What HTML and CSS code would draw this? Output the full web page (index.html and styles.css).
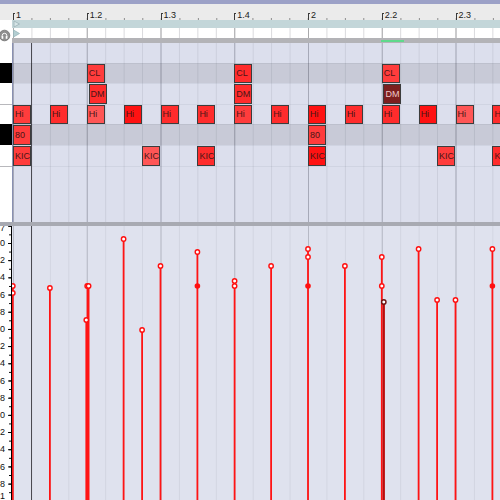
FILE: index.html
```html
<!DOCTYPE html>
<html>
<head>
<meta charset="utf-8">
<link rel="stylesheet" href="styles.css">
</head>
<body>
<div class="app">
  <div class="topbar"></div>
  <div class="header">
    <div class="hdr-left">
      <div class="hdr-left-top"></div>
      <div class="hdr-left-bottom">
        <svg class="hp" width="12" height="14" viewBox="0 0 12 14">
          <circle cx="4.5" cy="6.5" r="5.3" fill="#8f8f8f" stroke="#6e6e6e" stroke-width="0.8"/>
          <path d="M2.2 8.2 V6.6 a2.3 2.3 0 0 1 4.6 0 V8.2" fill="none" stroke="#fff" stroke-width="1"/>
          <rect x="1.6" y="7.2" width="1.7" height="2.6" fill="#fff"/>
          <rect x="5.7" y="7.2" width="1.7" height="2.6" fill="#fff"/>
        </svg>
      </div>
    </div>
    <div class="hdr-right">
      <div class="ruler">
        <div class="beat"><span class="tick"></span><span class="lbl">1</span></div>
        <div class="beat"><span class="tick"></span><span class="lbl">1.2</span></div>
        <div class="beat"><span class="tick"></span><span class="lbl">1.3</span></div>
        <div class="beat"><span class="tick"></span><span class="lbl">1.4</span></div>
        <div class="beat"><span class="tick"></span><span class="lbl">2</span></div>
        <div class="beat"><span class="tick"></span><span class="lbl">2.2</span></div>
        <div class="beat"><span class="tick"></span><span class="lbl">2.3</span></div>
      </div>
      <div class="loopbar">
        <svg class="tri" width="8" height="8" viewBox="0 0 8 8"><path d="M1 1 L6.5 4 L1 7 Z" fill="#d6e5e7" stroke="#9cb3b7" stroke-width="0.8"/></svg>
      </div>
      <div class="markerrow">
        <svg class="tri" width="8" height="9" viewBox="0 0 8 9"><path d="M0.5 1 L6.5 4.5 L0.5 8 Z" fill="#b3cfd3" stroke="#98b5ba" stroke-width="0.8"/></svg>
      </div>
      <div class="greybar"><span class="green"></span></div>
    </div>
  </div>

  <div class="notes">
    <div class="keys">
      <div class="key white h20"></div>
      <div class="key black h20"></div>
      <div class="key white h21"></div>
      <div class="key white h20 sep"></div>
      <div class="key black h21"></div>
      <div class="key white h21"></div>
      <div class="key white rest sep"></div>
    </div>
    <div class="roll">
      <div class="row h20"></div>
      <div class="row h20 dark">
        <div class="note v3" style="left:73.75px">CL</div>
        <div class="note v2" style="left:221.25px">CL</div>
        <div class="note v3" style="left:368.75px">CL</div>
      </div>
      <div class="row h21">
        <div class="note v2" style="left:75.6px">DM</div>
        <div class="note v2" style="left:221.25px">DM</div>
        <div class="note sel" style="left:370.4px">DM</div>
      </div>
      <div class="row h20">
        <div class="note v3" style="left:0px">Hi</div>
        <div class="note v2" style="left:36.88px">Hi</div>
        <div class="note v4" style="left:73.75px">Hi</div>
        <div class="note v1" style="left:110.63px">Hi</div>
        <div class="note v2" style="left:147.5px">Hi</div>
        <div class="note v2" style="left:184.38px">Hi</div>
        <div class="note v3" style="left:221.25px">Hi</div>
        <div class="note v2" style="left:258.13px">Hi</div>
        <div class="note v1" style="left:295px">Hi</div>
        <div class="note v2" style="left:331.88px">Hi</div>
        <div class="note v2" style="left:368.75px">Hi</div>
        <div class="note v1" style="left:405.63px">Hi</div>
        <div class="note v4" style="left:442.5px">Hi</div>
        <div class="note v2" style="left:479.38px">Hi</div>
      </div>
      <div class="row h21 dark">
        <div class="note v3" style="left:0px">80</div>
        <div class="note v3" style="left:295px">80</div>
      </div>
      <div class="row h21">
        <div class="note v3" style="left:0px">KIC</div>
        <div class="note v4" style="left:129.06px">KIC</div>
        <div class="note v2" style="left:184.38px">KIC</div>
        <div class="note v1" style="left:295px">KIC</div>
        <div class="note v3" style="left:424.06px">KIC</div>
        <div class="note v2" style="left:479.38px">KIC</div>
      </div>
      <div class="row rest"></div>
    </div>
  </div>

  <div class="splitter"></div>

  <div class="vel">
    <div class="velruler">
      <span class="vlabel" style="top:-3px">127</span>
      <span class="vlabel" style="top:12px">120</span>
      <span class="vlabel" style="top:29.2px">112</span>
      <span class="vlabel" style="top:46.4px">104</span>
      <span class="vlabel" style="top:63.6px">96</span>
      <span class="vlabel" style="top:80.8px">88</span>
      <span class="vlabel" style="top:98px">80</span>
      <span class="vlabel" style="top:115.2px">72</span>
      <span class="vlabel" style="top:132.4px">64</span>
      <span class="vlabel" style="top:149.6px">56</span>
      <span class="vlabel" style="top:166.8px">48</span>
      <span class="vlabel" style="top:184px">40</span>
      <span class="vlabel" style="top:201.2px">32</span>
      <span class="vlabel" style="top:218.4px">24</span>
      <span class="vlabel" style="top:235.6px">16</span>
      <span class="vlabel" style="top:252.8px">8</span>
      <span class="vlabel" style="top:265px">1</span>
    </div>
    <div class="lane">
      <svg class="stems" width="488" height="274" viewBox="12 226 488 274">
        <g class="stem">
          <line x1="12.8" y1="286" x2="12.8" y2="500"/>
          <line x1="49.9" y1="288" x2="49.9" y2="500"/>
          <line x1="86.3" y1="320" x2="86.3" y2="500"/>
          <line x1="87.5" y1="286" x2="87.5" y2="500"/>
          <line x1="88.6" y1="286" x2="88.6" y2="500"/>
          <line x1="123.6" y1="239" x2="123.6" y2="500"/>
          <line x1="142.1" y1="330" x2="142.1" y2="500"/>
          <line x1="160.5" y1="266" x2="160.5" y2="500"/>
          <line x1="197.4" y1="252" x2="197.4" y2="500"/>
          <line x1="234.6" y1="281" x2="234.6" y2="500"/>
          <line x1="271.1" y1="266" x2="271.1" y2="500"/>
          <line x1="308" y1="249" x2="308" y2="500"/>
          <line x1="344.9" y1="266" x2="344.9" y2="500"/>
          <line x1="381.8" y1="257" x2="381.8" y2="500"/>
          <line x1="418.6" y1="249" x2="418.6" y2="500"/>
          <line x1="437.1" y1="300" x2="437.1" y2="500"/>
          <line x1="455.5" y1="300" x2="455.5" y2="500"/>
          <line x1="492.4" y1="249" x2="492.4" y2="500"/>
        </g>
        <line class="stem-sel" x1="383.8" y1="302" x2="383.8" y2="500"/>
        <g class="dot">
          <circle cx="12.8" cy="286" r="2.2"/>
          <circle cx="12.8" cy="293" r="2.2"/>
          <circle cx="49.9" cy="288" r="2.2"/>
          <circle cx="86.3" cy="320" r="2.2"/>
          <circle cx="87.2" cy="286" r="2.2"/>
          <circle cx="88.6" cy="286" r="2.2"/>
          <circle cx="123.6" cy="239" r="2.2"/>
          <circle cx="142.1" cy="330" r="2.2"/>
          <circle cx="160.5" cy="266" r="2.2"/>
          <circle cx="197.4" cy="252" r="2.2"/>
          <circle cx="234.6" cy="281" r="2.2"/>
          <circle cx="234.6" cy="286" r="2.2"/>
          <circle cx="271.1" cy="266" r="2.2"/>
          <circle cx="308" cy="249" r="2.2"/>
          <circle cx="308" cy="257" r="2.2"/>
          <circle cx="344.9" cy="266" r="2.2"/>
          <circle cx="381.8" cy="257" r="2.2"/>
          <circle cx="381.8" cy="286" r="2.2"/>
          <circle cx="418.6" cy="249" r="2.2"/>
          <circle cx="437.1" cy="300" r="2.2"/>
          <circle cx="455.5" cy="300" r="2.2"/>
          <circle cx="492.4" cy="249" r="2.2"/>
        </g>
        <g class="dot-fill">
          <circle cx="197.4" cy="286" r="2.8"/>
          <circle cx="308" cy="286" r="2.8"/>
          <circle cx="492.4" cy="286" r="2.8"/>
        </g>
        <circle class="dot-sel" cx="383.8" cy="302" r="2.2"/>
      </svg>
    </div>
  </div>
</div>
</body>
</html>
```

FILE: styles.css
```css
* { box-sizing: border-box; }
html, body { margin: 0; padding: 0; }
body {
  width: 500px;
  height: 500px;
  overflow: hidden;
  font-family: "Liberation Sans", Arial, sans-serif;
  background: #dfe2ee;
}
.app {
  display: flex;
  flex-direction: column;
  width: 500px;
  height: 500px;
}
.topbar {
  flex: none;
  height: 4px;
  background: #9ca1c7;
}

/* header */
.header {
  flex: none;
  display: flex;
  height: 39px;
}
.hdr-left {
  flex: none;
  width: 12px;
  display: flex;
  flex-direction: column;
}
.hdr-left-top {
  height: 16px;
  background: #ebebeb;
}
.hdr-left-bottom {
  flex: 1;
  background: #ffffff;
  padding-top: 9px;
  overflow: hidden;
}
.hp { display: block; }
.hdr-right {
  flex: 1;
  min-width: 0;
  display: flex;
  flex-direction: column;
}
.ruler {
  height: 16px;
  background: #ebebeb;
  display: flex;
  padding-left: 1px;
  overflow: hidden;
}
.beat {
  flex: none;
  width: 73.75px;
  display: flex;
  align-items: flex-start;
  padding-top: 6px;
  background-image: linear-gradient(to right, #8a8a8a 0 1px, transparent 1px);
  background-size: 18.4375px 2px;
  background-position: 0 100%;
  background-repeat: repeat-x;
}
.tick {
  flex: none;
  width: 2px;
  height: 7px;
  margin-top: 3px;
  border-left: 1px solid #3a3a3a;
  border-top: 1px solid #3a3a3a;
}
.lbl {
  font-size: 9px;
  line-height: 10px;
  color: #1a1a1a;
  margin-left: 1px;
}
.loopbar {
  height: 8px;
  background: #c3d6d9;
  padding-left: 1px;
  display: flex;
  align-items: center;
}
.tri { display: block; flex: none; }
.markerrow {
  height: 10px;
  background-color: #ffffff;
  background-image:
    linear-gradient(to right, #a9a9ab 0 1px, transparent 1px),
    linear-gradient(to right, #d9d9dc 0 1px, transparent 1px);
  background-size: 73.75px 100%, 18.4375px 100%;
  background-position: 1px 0, 1px 0;
  padding-left: 1px;
  display: flex;
  align-items: center;
}
.greybar {
  height: 5px;
  background: #b3b3b7;
  display: flex;
  align-items: center;
  padding-left: 369px;
}
.green {
  display: block;
  width: 23px;
  height: 2px;
  background: #5fd98c;
}

/* note area */
.notes {
  flex: none;
  display: flex;
  height: 179px;
}
.keys {
  flex: none;
  width: 13px;
  display: flex;
  flex-direction: column;
  border-right: 1px solid #8990b2;
}
.key.white { background: #ffffff; }
.key.black { background: #000000; }
.key.sep { border-top: 1px solid #b8b8bc; }
.h20 { flex: none; height: 20px; }
.h21 { flex: none; height: 21px; }
.rest { flex: 1; }
.roll {
  flex: 1;
  min-width: 0;
  display: flex;
  flex-direction: column;
  overflow: hidden;
  background-color: #dcdfed;
  background-image:
    linear-gradient(to right, transparent 18px, #4a4a52 18px 19px, transparent 19px),
    linear-gradient(to right, #a6a9b8 0 1px, transparent 1px),
    linear-gradient(to right, #cbcedc 0 1px, transparent 1px);
  background-size: 100% 100%, 73.75px 100%, 18.4375px 100%;
  background-repeat: no-repeat, repeat-x, repeat-x;
}
.row {
  position: relative;
  border-top: 1px solid rgba(60, 64, 90, 0.07);
}
.row:first-child { border-top: none; }
.row.dark { background: rgba(0, 0, 0, 0.09); }
.note {
  position: absolute;
  top: 0;
  bottom: 0;
  width: 18px;
  border: 1px solid #3c3c3c;
  font-size: 9px;
  line-height: 9px;
  color: #4a1616;
  padding-left: 1px;
  display: flex;
  align-items: center;
  white-space: nowrap;
  overflow: hidden;
}
.note.v1 { background: #ff1212; }
.note.v2 { background: #ff2c2c; }
.note.v3 { background: #ff3c3c; }
.note.v4 { background: #ff5656; }
.note.sel { background: #7c1f1f; color: #eccaca; }

/* splitter */
.splitter {
  flex: none;
  height: 4px;
  background: #a8aab2;
}

/* velocity */
.vel {
  flex: 1;
  display: flex;
  min-height: 0;
}
.velruler {
  flex: none;
  width: 12px;
  position: relative;
  overflow: hidden;
  background-color: #ffffff;
  border-right: 1px solid #000000;
  background-image:
    linear-gradient(to bottom, #000 0 1px, transparent 1px),
    linear-gradient(to bottom, #000 0 1px, transparent 1px);
  background-size: 3px 17.2px, 2px 8.6px;
  background-position: right 0 top -0.2px, right 0 top 8.4px;
  background-repeat: repeat-y, repeat-y;
}
.vlabel {
  position: absolute;
  right: 6px;
  font-size: 9px;
  line-height: 10px;
  color: #111;
  white-space: nowrap;
}
.lane {
  flex: 1;
  min-width: 0;
  overflow: hidden;
  background-color: #dfe2ee;
  background-image:
    linear-gradient(to right, transparent 19px, #4a4a52 19px 20px, transparent 20px),
    linear-gradient(to right, #b6b9c5 0 1px, transparent 1px),
    linear-gradient(to right, #d2d5e1 0 1px, transparent 1px);
  background-size: 100% 100%, 73.75px 100%, 18.4375px 100%;
  background-position: 0 0, 1px 0, 1px 0;
  background-repeat: no-repeat, repeat-x, repeat-x;
}
.stems { display: block; }
.stem line { stroke: #ff1414; stroke-width: 1.8; }
.stem-sel { stroke: #b80c0c; stroke-width: 2.2; }
.dot circle { fill: #ffffff; stroke: #ff1010; stroke-width: 1.4; }
.dot-fill circle { fill: #ff1010; stroke: none; }
.dot-sel { fill: #ffffff; stroke: #6e1414; stroke-width: 1.4; }
```
